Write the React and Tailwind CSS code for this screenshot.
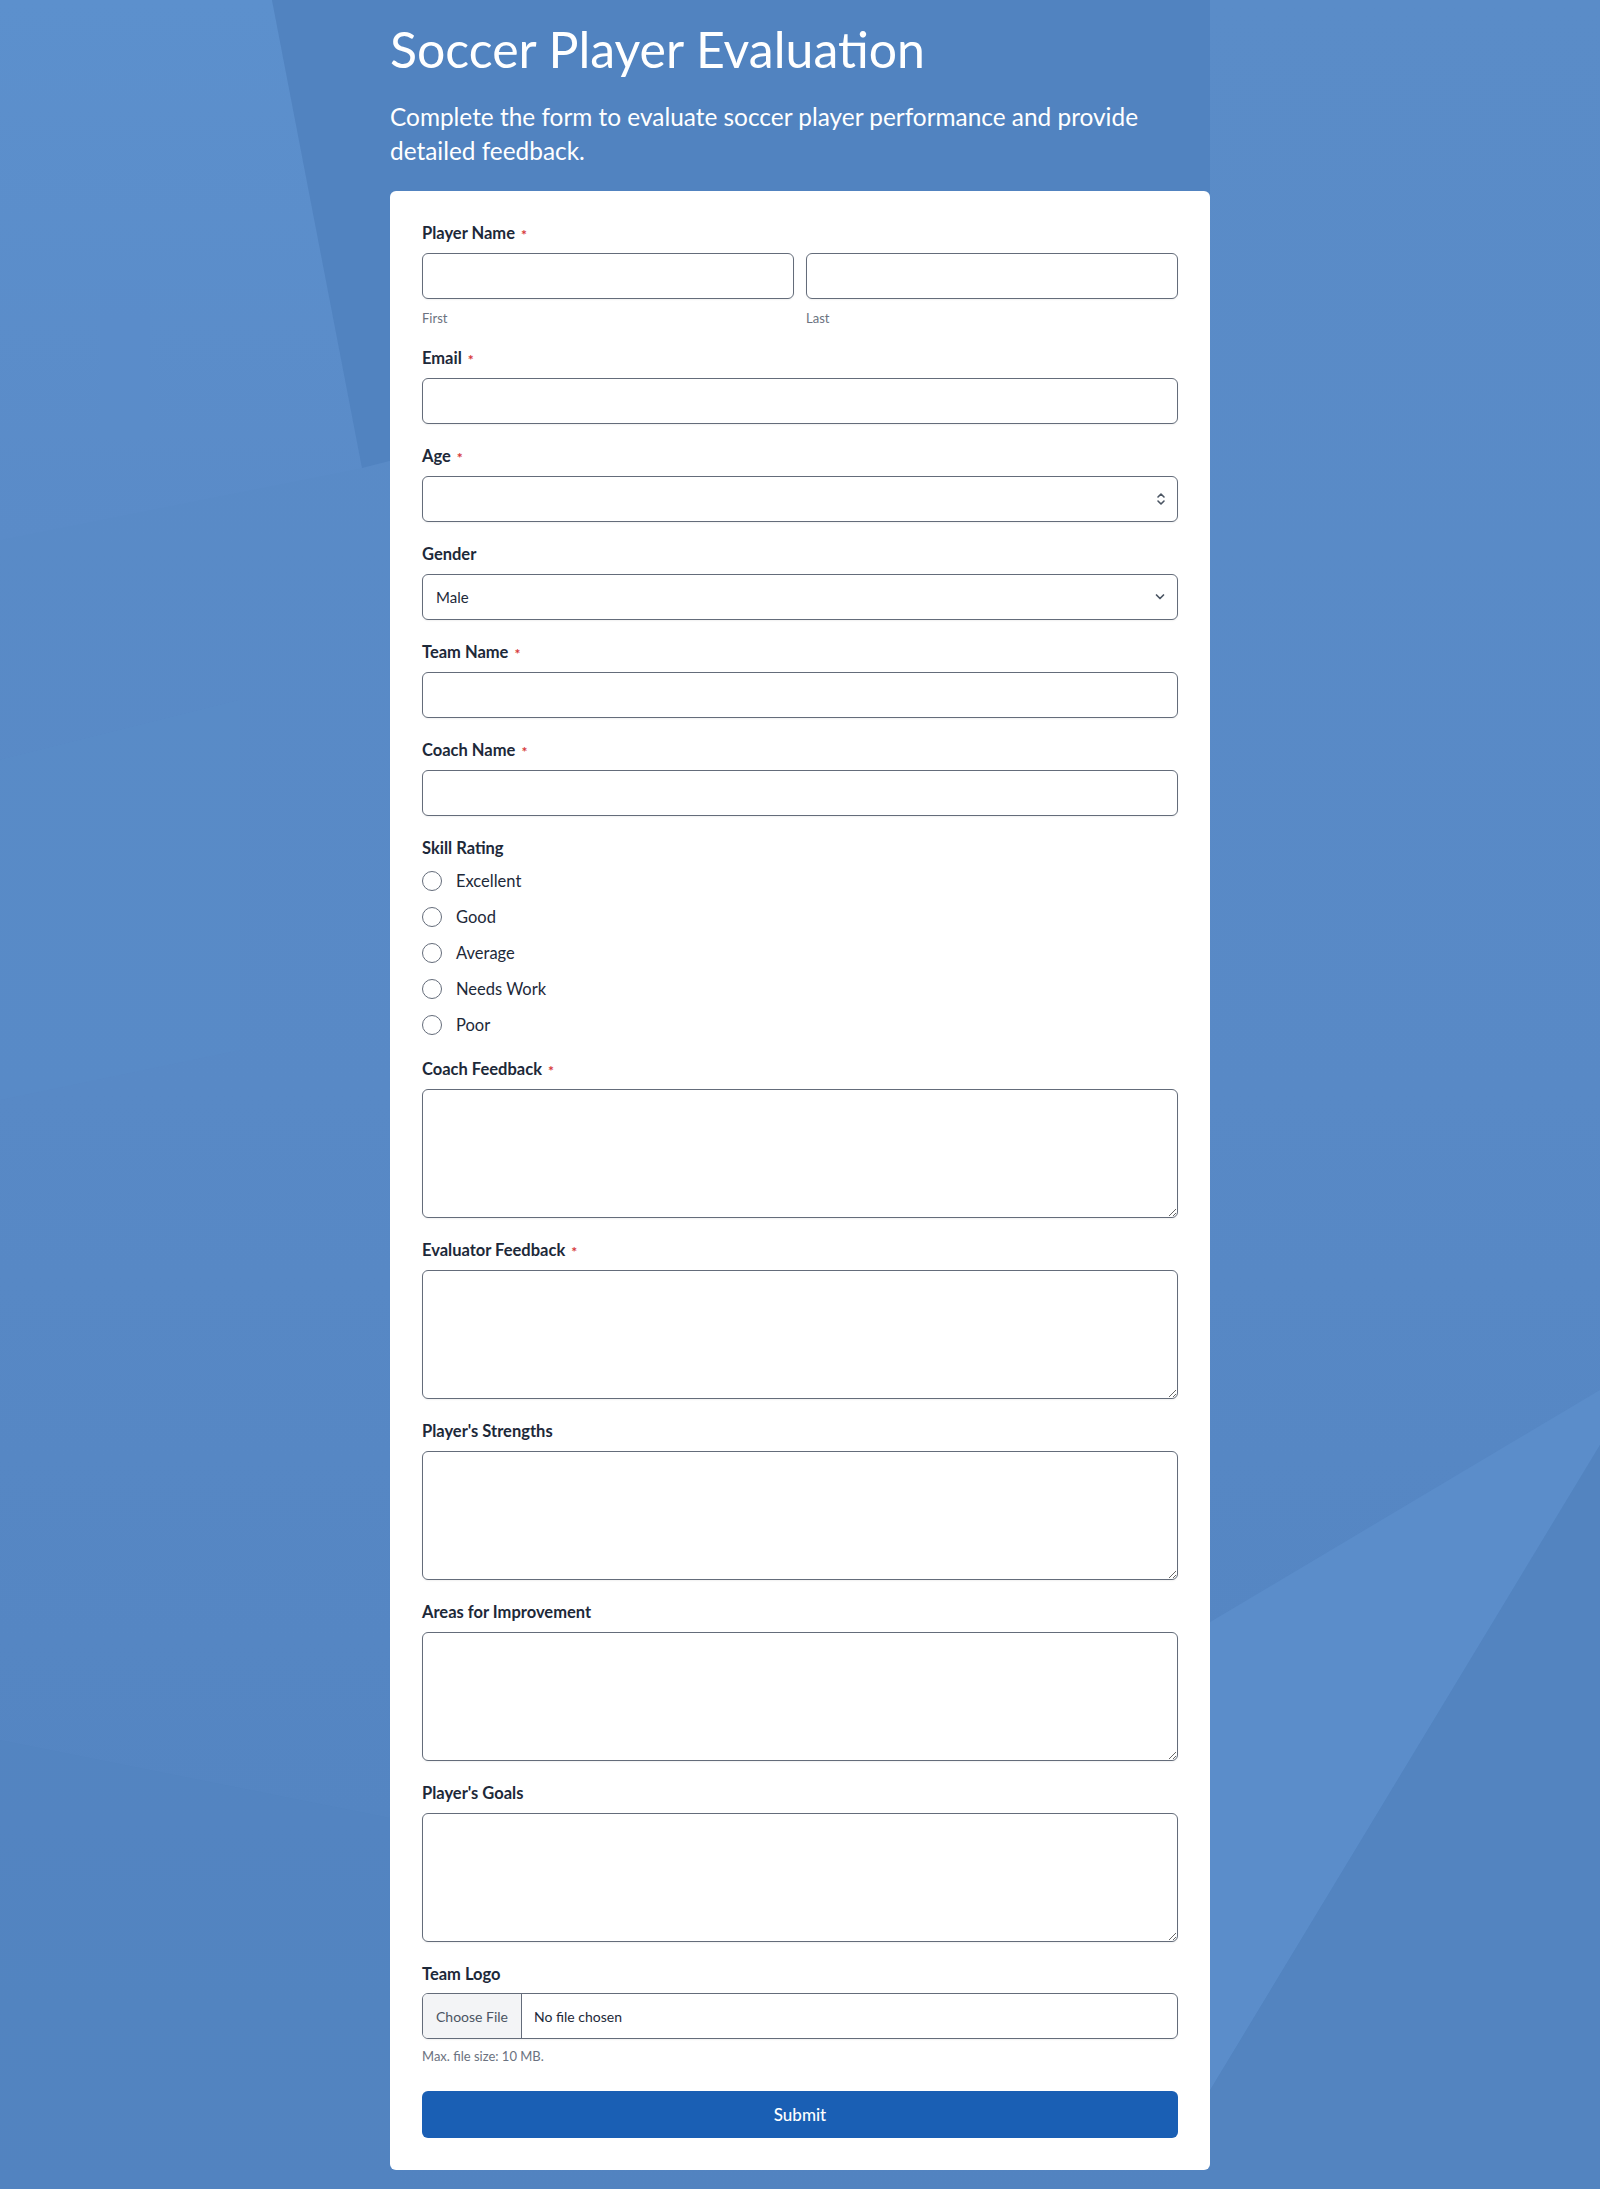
import React from "react";

const font = "font-['Lato','Noto_Sans',sans-serif]";

const Required = () => <span className="ml-[6px] text-[14px] text-[#d63638] relative top-[1px]">*</span>;

const Label = ({ children, required }) => (
  <div className="h-5 mb-[10px] text-[16.5px] leading-5 font-bold text-[#1d2939]">
    {children}
    {required && <Required />}
  </div>
);

const inputCls =
  "block w-full h-[46px] px-3 rounded-[6px] border border-[#646c7a] bg-white shadow-[0_1px_2px_rgba(0,0,0,0.06)] text-[15px] text-[#1d2939] outline-none";

const TextField = ({ label, required }) => (
  <div className="mb-[22px]">
    <Label required={required}>{label}</Label>
    <input type="text" className={inputCls} />
  </div>
);

const AreaField = ({ label, required }) => (
  <div className="mb-[22px]">
    <Label required={required}>{label}</Label>
    <textarea className="block w-full h-[129px] px-3 py-2 rounded-[6px] border border-[#646c7a] bg-white shadow-[0_1px_2px_rgba(0,0,0,0.06)] text-[15px] outline-none" />
  </div>
);

const ratings = ["Excellent", "Good", "Average", "Needs Work", "Poor"];

// soft polygon backdrop
const Backdrop = () => (
  <svg
    className="absolute inset-0 w-full h-full"
    viewBox="0 0 1600 2189"
    preserveAspectRatio="none"
  >
    <defs>
      <linearGradient id="bg" x1="0" y1="0" x2="0" y2="1">
        <stop offset="0" stopColor="#5a8cc8" />
        <stop offset="0.5" stopColor="#5889c6" />
        <stop offset="1" stopColor="#5283c0" />
      </linearGradient>
      <linearGradient id="lt" x1="0" y1="0" x2="0" y2="1">
        <stop offset="0" stopColor="#5c90cd" />
        <stop offset="1" stopColor="#5a8bc8" />
      </linearGradient>
    </defs>
    <rect width="1600" height="2189" fill="url(#bg)" />
    <polygon points="0,0 272,0 362,468 0,540" fill="url(#lt)" />
    <polygon points="272,0 1210,0 1210,250 362,468" fill="#5183c0" />
    <polygon points="100,280 150,280 150,440 100,440" fill="#5b8dca" opacity="0.4" />
    <polygon points="0,760 240,700 240,1050 0,1100" fill="#5a8bc8" opacity="0.4" />
    <polygon points="1180,1640 1600,1390 1600,1445 1180,2140" fill="#5b8dca" />
    <polygon points="1180,2140 1600,1445 1600,2189 1180,2189" fill="#5384c0" />
    <polygon points="0,1740 400,1820 400,2189 0,2189" fill="#5183bf" opacity="0.5" />
  </svg>
);

export default function App() {
  return (
    <div className={`relative min-h-screen overflow-hidden ${font}`}>
      <Backdrop />
      <div className="relative w-[820px] mx-auto pt-[21px] pb-[18px]">
        <h1 className="text-[50px] leading-[56px] font-normal text-white">Soccer Player Evaluation</h1>
        <p className="mt-[23px] text-[24.4px] leading-[34px] text-white">
          Complete the form to evaluate soccer player performance and provide detailed feedback.
        </p>

        <div className="mt-[23px] bg-white rounded-[6px] px-8 pt-8 pb-8">
          {/* Player Name */}
          <div className="mb-[22px]">
            <Label required>Player Name</Label>
            <div className="grid grid-cols-2 gap-3">
              <div>
                <input type="text" className={inputCls} />
                <div className="mt-[11px] text-[13px] leading-4 text-[#6b7280]">First</div>
              </div>
              <div>
                <input type="text" className={inputCls} />
                <div className="mt-[11px] text-[13px] leading-4 text-[#6b7280]">Last</div>
              </div>
            </div>
          </div>

          <TextField label="Email" required />

          {/* Age */}
          <div className="mb-[22px]">
            <Label required>Age</Label>
            <div className="relative">
              <input type="text" className={inputCls} />
              <svg
                className="absolute right-[12px] top-1/2 -translate-y-1/2 w-[10px] h-[16px]"
                viewBox="0 0 10 16"
                fill="none"
                stroke="#4b5563"
                strokeWidth="1.6"
                strokeLinecap="round"
                strokeLinejoin="round"
              >
                <path d="M2 6 L5 3 L8 6" />
                <path d="M2 10 L5 13 L8 10" />
              </svg>
            </div>
          </div>

          {/* Gender */}
          <div className="mb-[22px]">
            <Label>Gender</Label>
            <div className="relative">
              <select className={`${inputCls} appearance-none text-[14px] pl-[13px]`} defaultValue="Male">
                <option>Male</option>
                <option>Female</option>
                <option>Other</option>
              </select>
              <svg
                className="absolute right-[12px] top-1/2 -translate-y-1/2 w-[12px] h-[12px]"
                viewBox="0 0 12 12"
                fill="none"
                stroke="#4b5563"
                strokeWidth="1.7"
                strokeLinecap="round"
                strokeLinejoin="round"
              >
                <path d="M2.5 4 L6 7.5 L9.5 4" />
              </svg>
            </div>
          </div>

          <TextField label="Team Name" required />
          <TextField label="Coach Name" required />

          {/* Skill Rating */}
          <div className="mb-[22px]">
            <div className="h-5 mb-[11px] text-[16.5px] leading-5 font-bold text-[#1d2939]">Skill Rating</div>
            <div className="flex flex-col gap-3">
              {ratings.map((r) => (
                <label key={r} className="flex items-center h-6 gap-[14px]">
                  <input
                    type="radio"
                    name="rating"
                    className="appearance-none w-5 h-5 rounded-full border border-[#646c7a] bg-white m-0"
                  />
                  <span className="text-[16.5px] text-[#1d2939]">{r}</span>
                </label>
              ))}
            </div>
          </div>

          <AreaField label="Coach Feedback" required />
          <AreaField label="Evaluator Feedback" required />
          <AreaField label="Player's Strengths" />
          <AreaField label="Areas for Improvement" />
          <AreaField label="Player's Goals" />

          {/* Team Logo */}
          <div>
            <div className="h-5 mb-[9px] text-[16.5px] leading-5 font-bold text-[#1d2939]">Team Logo</div>
            <label className="flex h-[46px] rounded-[6px] border border-[#646c7a] overflow-hidden shadow-[0_1px_2px_rgba(0,0,0,0.06)] cursor-pointer">
              <span className="flex items-center justify-center w-[99px] bg-[#f3f4f6] border-r border-[#646c7a] text-[14px] text-[#4b5563]">
                Choose File
              </span>
              <span className="flex items-center pl-3 text-[14px] text-[#1d2939]">No file chosen</span>
              <input type="file" className="hidden" />
            </label>
            <div className="mt-[9px] text-[13px] leading-4 text-[#6b7280]">Max. file size: 10 MB.</div>
          </div>

          <button
            type="submit"
            className="mt-[27px] w-full h-[47px] rounded-[6px] bg-[#1a5fb4] text-white text-[17px] font-medium"
          >
            Submit
          </button>
        </div>
      </div>
    </div>
  );
}
